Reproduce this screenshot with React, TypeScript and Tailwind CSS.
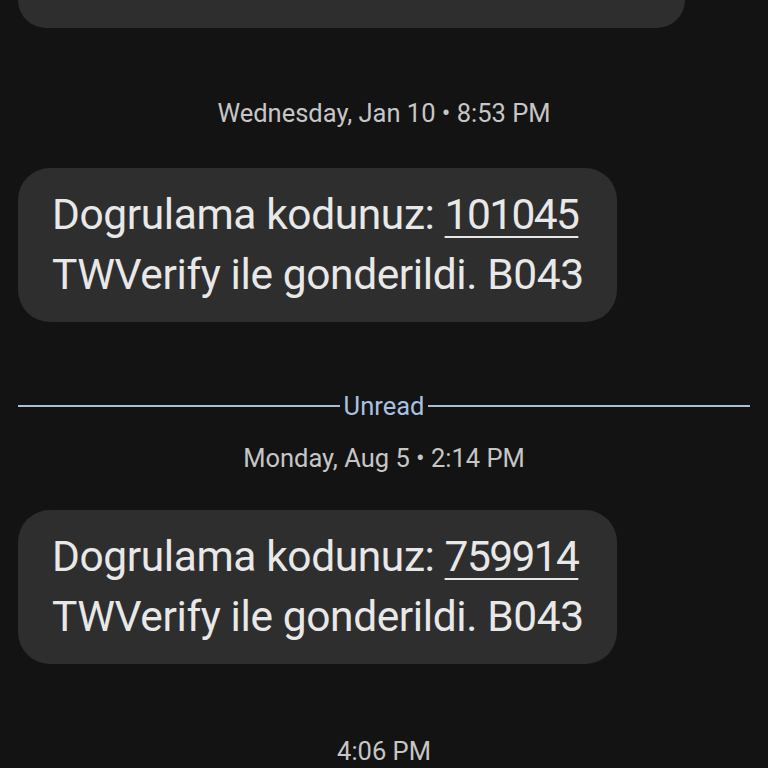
import React from 'react';

const font = { fontFamily: 'Roboto, "Noto Sans", sans-serif' };

const Stamp: React.FC<{ text: string; className?: string }> = ({ text, className }) => (
    <div className={`shrink-0 text-center text-[25.5px] leading-none text-[#c6c6c6] ${className ?? ''}`}>{text}</div>
);

const Bubble: React.FC<{ code: string }> = ({ code }) => (
    <div className="ml-[18px] w-[599px] rounded-[32px] bg-[#2e2e2e] px-[34px] py-[17px] text-[42.5px] leading-[60px] text-[#e8e8e8] tracking-[-0.4px] whitespace-nowrap">
        <div>
            Dogrulama kodunuz: <span className="underline decoration-[2px] underline-offset-[7px] tracking-[-1.6px]">{code}</span>
        </div>
        <div>TWVerify ile gonderildi. B043</div>
    </div>
);

export default function App() {
    return (
        <div className="w-[768px] h-[768px] overflow-hidden bg-[#131313] flex flex-col" style={font}>
            <div className="shrink-0 mx-[18px] h-[28px] w-[667px] rounded-b-[32px] bg-[#2e2e2e]" />

            <Stamp text="Wednesday, Jan 10 • 8:53 PM" className="mt-[73px]" />

            <div className="shrink-0 mt-[41px]">
                <Bubble code="101045" />
            </div>

            <div className="shrink-0 mt-[72px] flex items-center px-[18px] gap-[4px]">
                <div className="h-[2px] flex-1 bg-[#a9bfd8]" />
                <div className="text-[25.5px] leading-none text-[#a9c1e0]">Unread</div>
                <div className="h-[2px] flex-1 bg-[#a9bfd8]" />
            </div>

            <Stamp text="Monday, Aug 5 • 2:14 PM" className="mt-[27px]" />

            <div className="shrink-0 mt-[38px]">
                <Bubble code="759914" />
            </div>

            <Stamp text="4:06 PM" className="mt-[75px]" />
        </div>
    );
}
